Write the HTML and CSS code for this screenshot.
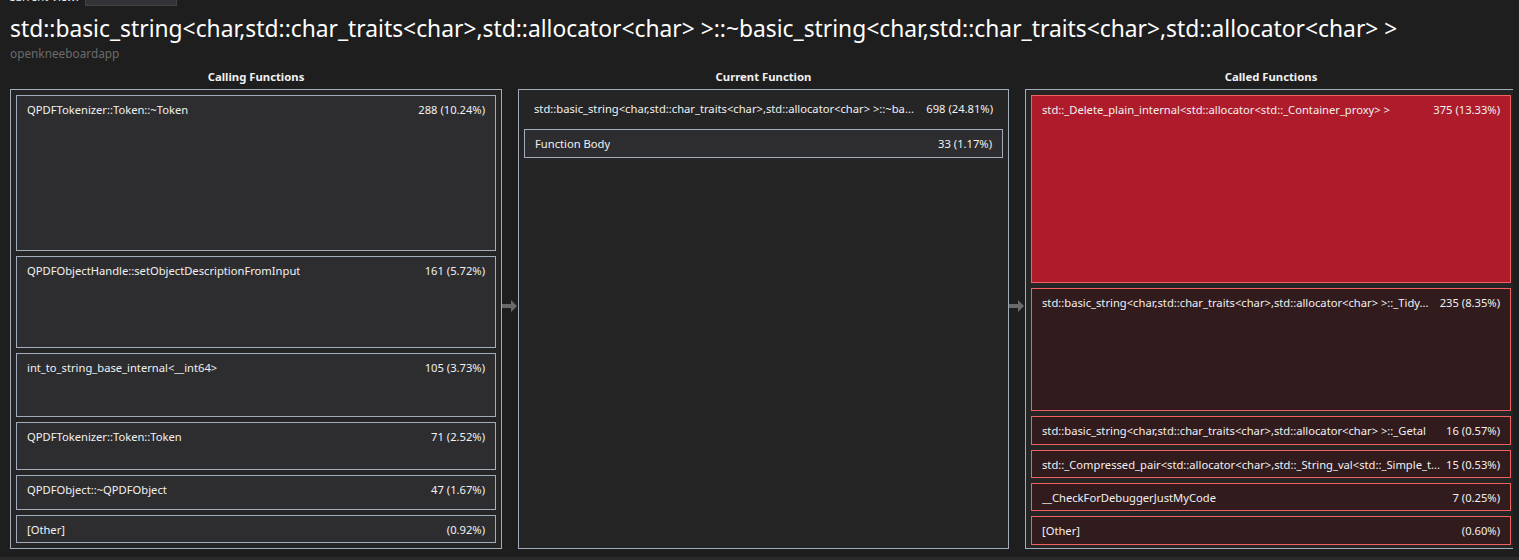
FILE: index.html
```html
<!DOCTYPE html>
<html lang="en">
<head>
<meta charset="utf-8">
<title>Caller/Callee</title>
<link rel="stylesheet" href="styles.css">
</head>
<body>
<div class="toolbar">
  <span class="tb-label">Current View:</span>
  <span class="tb-select">Caller/Callee</span>
</div>
<h1 class="title">std::basic_string&lt;char,std::char_traits&lt;char&gt;,std::allocator&lt;char&gt; &gt;::~basic_string&lt;char,std::char_traits&lt;char&gt;,std::allocator&lt;char&gt; &gt;</h1>
<div class="subtitle">openkneeboardapp</div>

<div class="clip">
  <div class="columns">
    <section class="col">
      <div class="col-head">Calling Functions</div>
      <div class="panel">
        <div class="item" style="height:156px"><span class="name">QPDFTokenizer::Token::~Token</span><span class="val">288 (10.24%)</span></div>
        <div class="item" style="height:92px"><span class="name">QPDFObjectHandle::setObjectDescriptionFromInput</span><span class="val">161 (5.72%)</span></div>
        <div class="item" style="height:64px"><span class="name">int_to_string_base_internal&lt;__int64&gt;</span><span class="val">105 (3.73%)</span></div>
        <div class="item" style="height:48px"><span class="name">QPDFTokenizer::Token::Token</span><span class="val">71 (2.52%)</span></div>
        <div class="item" style="height:35px"><span class="name">QPDFObject::~QPDFObject</span><span class="val">47 (1.67%)</span></div>
        <div class="item" style="height:28px"><span class="name">[Other]</span><span class="val">(0.92%)</span></div>
      </div>
    </section>

    <div class="arrow-col">
      <svg class="arrow" width="16" height="14" viewBox="0 0 16 14"><path d="M0 5h9V1l6 6-6 6V9H0z" fill="#6a6a6a"/></svg>
    </div>

    <section class="col">
      <div class="col-head">Current Function</div>
      <div class="panel">
        <div class="current">
          <div class="current-row"><span class="name">std::basic_string&lt;char,std::char_traits&lt;char&gt;,std::allocator&lt;char&gt; &gt;::~ba...</span><span class="val">698 (24.81%)</span></div>
          <div class="item" style="height:29px"><span class="name">Function Body</span><span class="val">33 (1.17%)</span></div>
        </div>
      </div>
    </section>

    <div class="arrow-col">
      <svg class="arrow" width="16" height="14" viewBox="0 0 16 14"><path d="M0 5h9V1l6 6-6 6V9H0z" fill="#6a6a6a"/></svg>
    </div>

    <section class="col">
      <div class="col-head">Called Functions</div>
      <div class="panel">
        <div class="item hot" style="height:188px"><span class="name">std::_Delete_plain_internal&lt;std::allocator&lt;std::_Container_proxy&gt; &gt;</span><span class="val">375 (13.33%)</span></div>
        <div class="item warm" style="height:123px"><span class="name">std::basic_string&lt;char,std::char_traits&lt;char&gt;,std::allocator&lt;char&gt; &gt;::_Tidy...</span><span class="val">235 (8.35%)</span></div>
        <div class="item warm" style="height:29px"><span class="name">std::basic_string&lt;char,std::char_traits&lt;char&gt;,std::allocator&lt;char&gt; &gt;::_Getal</span><span class="val">16 (0.57%)</span></div>
        <div class="item warm" style="height:28px"><span class="name">std::_Compressed_pair&lt;std::allocator&lt;char&gt;,std::_String_val&lt;std::_Simple_t...</span><span class="val">15 (0.53%)</span></div>
        <div class="item warm" style="height:28px"><span class="name">__CheckForDebuggerJustMyCode</span><span class="val">7 (0.25%)</span></div>
        <div class="item warm" style="height:29px"><span class="name">[Other]</span><span class="val">(0.60%)</span></div>
      </div>
    </section>
  </div>
</div>
<div class="footer"></div>
</body>
</html>
```

FILE: styles.css
```css
html, body {
  margin: 0;
  padding: 0;
  background: #1e1e1e;
  color: #f1f1f1;
  font-family: "Noto Sans", "Open Sans", "Liberation Sans", sans-serif;
  height: 560px;
  overflow: hidden;
}

.toolbar {
  display: flex;
  align-items: center;
  gap: 6px;
  height: 20px;
  margin-top: -14px;
  padding-left: 8px;
  font-size: 11.2px;
}

.tb-label {
  color: #f1f1f1;
}

.tb-select {
  box-sizing: border-box;
  width: 92px;
  height: 20px;
  line-height: 18px;
  padding-left: 8px;
  background: #333337;
  border: 1px solid #434346;
  color: #f1f1f1;
}

.title {
  margin: 7px 0 0 10px;
  font-size: 22.8px;
  line-height: 31px;
  font-weight: 400;
  white-space: nowrap;
  color: #ffffff;
}

.subtitle {
  margin-left: 10px;
  font-size: 11.8px;
  line-height: 18px;
  color: #6b6b6b;
}

.clip {
  width: 1503px;
  margin-left: 10px;
  overflow: hidden;
}

.columns {
  display: grid;
  grid-template-columns: 492px 16px 491px 16px 492px;
  width: 1507px;
}

.col {
  display: flex;
  flex-direction: column;
}

.col-head {
  text-align: center;
  font-weight: 700;
  font-size: 11.3px;
  line-height: 16px;
  padding: 7px 0 4px;
  color: #f1f1f1;
}

.panel {
  box-sizing: border-box;
  height: 460px;
  border: 1px solid #a2acbd;
  background: #252526;
  padding: 5px;
  display: flex;
  flex-direction: column;
  gap: 5px;
}

.item {
  box-sizing: border-box;
  flex: none;
  display: flex;
  justify-content: space-between;
  align-items: flex-start;
  gap: 4px;
  padding: 6px 10px 0 10px;
  border: 1px solid #a2acbd;
  background: #2d2d30;
  font-size: 11.2px;
  line-height: 16px;
  white-space: nowrap;
  overflow: hidden;
}

.name {
  overflow: hidden;
  min-width: 0;
}

.val {
  flex: none;
}

.item.hot {
  background: #ae1c2c;
  border-color: #f0625f;
}

.item.warm {
  background: #321b1d;
  border-color: #f0625f;
}

.current {
  display: flex;
  flex-direction: column;
  gap: 1px;
}

.current-row {
  box-sizing: border-box;
  height: 33px;
  display: flex;
  justify-content: space-between;
  gap: 4px;
  padding: 6px 10px 0 10px;
  font-size: 11.2px;
  line-height: 16px;
  white-space: nowrap;
  overflow: hidden;
}

.arrow-col {
  display: flex;
  justify-content: center;
  padding-top: 237px;
}

.arrow {
  display: block;
}

.footer {
  margin-top: 8px;
  height: 10px;
  background: #2b2b2d;
}
```
